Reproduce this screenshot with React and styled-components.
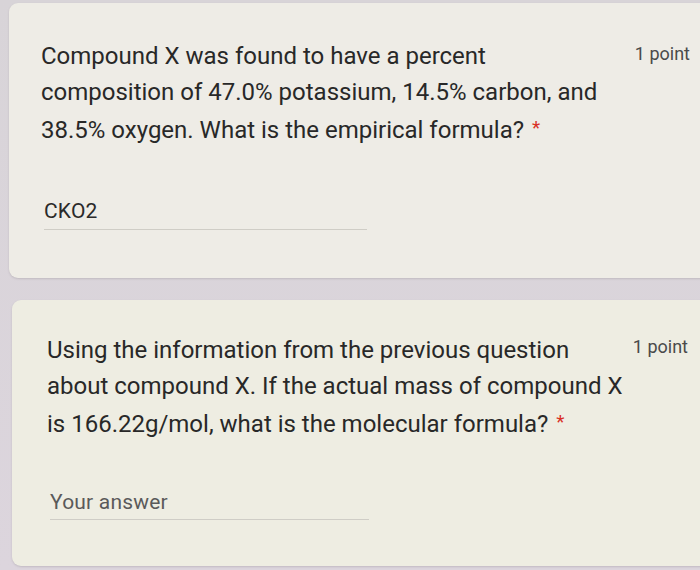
import React from "react";
import styled, { createGlobalStyle } from "styled-components";

const Global = createGlobalStyle`
  html, body { margin: 0; padding: 0; }
  body {
    width: 700px; height: 570px; overflow: hidden;
    background: #dcd6dc;
    font-family: Roboto, "Liberation Sans", Arial, sans-serif;
  }
`;

const Page = styled.div`
  display: flex;
  flex-direction: column;
  gap: 22px;
  padding: 3px 0 0 9px;
  width: 720px;
  height: 570px;
  box-sizing: border-box;
  background: linear-gradient(180deg, #d8d4d8 0%, #dcd5dd 100%);
`;

const Card = styled.div`
  background: ${p => p.$bg};
  border-radius: 9px;
  height: ${p => p.$h}px;
  margin-left: ${p => p.$indent}px;
  box-sizing: border-box;
  padding: ${p => p.$pt}px ${p => p.$pr}px 0 ${p => p.$pl}px;
  box-shadow: 0 1px 2px rgba(120, 110, 120, 0.25);
  display: flex;
  flex-direction: column;
`;

const Header = styled.div`
  display: grid;
  grid-template-columns: minmax(0, 1fr) auto;
  align-items: start;
`;

const Question = styled.div`
  font-size: 24px;
  line-height: 35.5px;
  color: #282828;
  white-space: nowrap;
`;

const Star = styled.span`
  color: #d93025;
  font-size: 19px;
  margin-left: 8px;
  vertical-align: 4px;
`;

const Points = styled.div`
  font-size: 18px;
  color: #4a4a4a;
  margin-top: ${p => p.$mt}px;
  white-space: nowrap;
`;

const Answer = styled.div`
  margin-top: ${p => p.$mt}px;
  margin-left: ${p => p.$ml}px;
  width: ${p => p.$w}px;
  border-bottom: 1px solid #cfcdc6;
  padding-bottom: ${p => p.$pb}px;
  font-size: 21px;
  letter-spacing: 0.2px;
  color: ${p => (p.$placeholder ? "#5a5a5a" : "#2a2a2a")};
`;

export default function App() {
  return (
    <>
      <Global />
      <Page>
        <Card $bg="#eeece6" $h={275} $indent={0} $pt={36} $pl={32} $pr={30}>
          <Header>
            <Question>
              Compound X was found to have a percent<br />
              composition of 47.0% potassium, 14.5% carbon, and<br />
              38.5% oxygen. What is the empirical formula?
              <Star>*</Star>
            </Question>
            <Points $mt={4}>1 point</Points>
          </Header>
          <Answer $mt={50} $ml={3} $w={323} $pb={6}>CKO2</Answer>
        </Card>
        <Card $bg="#eeede2" $h={266} $indent={3} $pt={33} $pl={35} $pr={32}>
          <Header>
            <Question>
              Using the information from the previous question<br />
              about compound X. If the actual mass of compound X<br />
              is 166.22g/mol, what is the molecular formula?
              <Star>*</Star>
            </Question>
            <Points $mt={3}>1 point</Points>
          </Header>
          <Answer $mt={47} $ml={3} $w={319} $pb={5} $placeholder>Your answer</Answer>
        </Card>
      </Page>
    </>
  );
}
